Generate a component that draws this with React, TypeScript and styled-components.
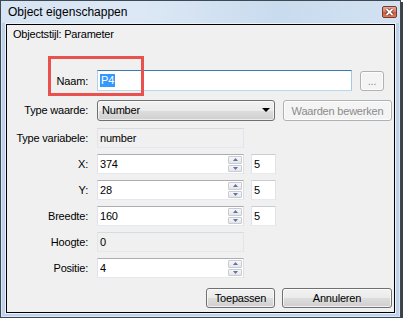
import styled, { createGlobalStyle } from 'styled-components';

const GlobalStyle = createGlobalStyle`
  * { box-sizing: border-box; }
  html, body { margin: 0; padding: 0; background: #ffffff; }
  body {
    font-family: "Liberation Sans", Arial, sans-serif;
    font-size: 11px;
    letter-spacing: -0.2px;
    color: #000;
  }
`;

const Window = styled.div`
  position: relative;
  width: 401px;
  height: 318px;
  border: 1px solid #3f4953;
  background: #bdd2ea;
  box-shadow: 2px 2px 0 rgba(30, 30, 30, 0.85), inset 0 0 0 1px rgba(255, 255, 255, 0.45);
  display: flex;
  flex-direction: column;
`;

const TitleBar = styled.div`
  height: 22px;
  flex: none;
  display: flex;
  align-items: flex-start;
  justify-content: space-between;
  padding: 4px 3px 0 7px;
  background: linear-gradient(to right, #d6e4f3 0%, #dce8f5 35%, #c9dbee 70%, #d2e2f2 100%);
`;

const Title = styled.span`
  font-size: 12px;
  line-height: 15px;
  letter-spacing: 0;
`;

const CloseButton = styled.div`
  width: 15px;
  height: 12px;
  margin-top: 1px;
  border: 1px solid #7a3a2c;
  border-radius: 2px;
  background: linear-gradient(#eaa996 0%, #d98068 45%, #cb5a3f 55%, #de7c5f 100%);
  display: flex;
  align-items: center;
  justify-content: center;
`;

const Panel = styled.div`
  position: relative;
  flex: 1;
  margin: 1px 5px 4px 5px;
  border: 1px solid #000;
  box-shadow: 0 0 0 1px rgba(255, 255, 255, 0.7);
  background: #f0f0f0;
  padding: 3px 2px 0 0;
  display: flex;
  flex-direction: column;
`;

const Header = styled.div`
  line-height: 13px;
  padding-left: 6px;
`;

const Row = styled.div<{ $top: number; $h?: number }>`
  display: flex;
  align-items: center;
  margin-top: ${p => p.$top}px;
  height: ${p => p.$h ?? 20}px;
`;

const Label = styled.label`
  width: 81px;
  margin-right: 9px;
  text-align: right;
  flex: none;
`;

const TextBox = styled.div<{ $w: number; $h?: number; $focus?: boolean; $readOnly?: boolean }>`
  width: ${p => p.$w}px;
  height: ${p => p.$h ?? 20}px;
  border: 1px solid;
  border-color: ${p =>
    p.$focus ? '#3d7bad #a4c9e3 #b7d9ed #b5cfe7'
    : p.$readOnly ? '#d7dbe0 #e1e4e8 #e6e9ec #e1e4e8'
    : '#abadb3 #dbdfe6 #e3e9ef #e2e3ea'};
  background: ${p => (p.$readOnly ? '#f0f0f0' : '#ffffff')};
  padding-left: 2px;
  display: flex;
  align-items: center;
  line-height: 13px;
`;

const Selected = styled.span`
  background: #3399ff;
  color: #fff;
  padding: 0 1px;
`;

const SpinBox = styled.div`
  width: 147px;
  height: 20px;
  border: 1px solid;
  border-color: #abadb3 #dbdfe6 #e3e9ef #e2e3ea;
  background: #fff;
  display: flex;
  align-items: stretch;
  padding: 1px;
`;

const SpinValue = styled.span`
  flex: 1;
  padding-left: 1px;
  display: flex;
  align-items: center;
`;

const SpinButtons = styled.div`
  width: 14px;
  display: flex;
  flex-direction: column;
  gap: 1px;
`;

const SpinButton = styled.div`
  flex: 1;
  border: 1px solid #c8ccd2;
  border-radius: 1px;
  background: linear-gradient(#f7f7f7, #e6e6e6);
  display: flex;
  align-items: center;
  justify-content: center;
`;

const SmallBox = styled(TextBox)`
  margin-left: 7px;
  border-color: #c9ced5 #e0e4e9 #e6e9ee #e0e4e9;
`;

const Select = styled.div`
  width: 178px;
  height: 21px;
  border: 1px solid #707070;
  border-radius: 3px;
  background: linear-gradient(#f2f2f2 0%, #ebebeb 50%, #dddddd 51%, #cfcfcf 100%);
  box-shadow: inset 0 0 0 1px rgba(255, 255, 255, 0.6);
  display: flex;
  align-items: center;
  justify-content: space-between;
  padding: 0 4px 0 4px;
`;

const Arrow = styled.span`
  width: 0;
  height: 0;
  border-left: 4px solid transparent;
  border-right: 4px solid transparent;
  border-top: 4px solid #000;
`;

const Button = styled.div<{ $w: number; $h?: number; $disabled?: boolean; $ml?: number }>`
  width: ${p => p.$w}px;
  height: ${p => p.$h ?? 20}px;
  margin-left: ${p => p.$ml ?? 7}px;
  border: 1px solid ${p => (p.$disabled ? '#adb2b5' : '#707070')};
  border-radius: 3px;
  background: ${p =>
    p.$disabled ? '#f4f4f4' : 'linear-gradient(#f2f2f2 0%, #ebebeb 50%, #dddddd 51%, #cfcfcf 100%)'};
  box-shadow: inset 0 0 0 1px rgba(255, 255, 255, 0.7);
  color: ${p => (p.$disabled ? '#8b8b8b' : '#000')};
  display: flex;
  align-items: center;
  justify-content: center;
  flex: none;
`;

const ButtonRow = styled.div`
  display: flex;
  justify-content: flex-end;
  margin-top: 10px;
`;

const Annotation = styled.div`
  position: absolute;
  left: 41px;
  top: 31px;
  width: 96px;
  height: 40px;
  border: 3px solid #e8514e;
  pointer-events: none;
`;

const Tri = ({ up }: { up?: boolean }) => (
  <svg width="5" height="3" viewBox="0 0 5 3">
    <path d={up ? 'M0 3 L2.5 0 L5 3 Z' : 'M0 0 L2.5 3 L5 0 Z'} fill="#5a72ad" />
  </svg>
);

const Spin = ({ value }: { value: string }) => (
  <SpinBox>
    <SpinValue>{value}</SpinValue>
    <SpinButtons>
      <SpinButton><Tri up /></SpinButton>
      <SpinButton><Tri /></SpinButton>
    </SpinButtons>
  </SpinBox>
);

export default function App() {
  return (
    <>
      <GlobalStyle />
      <Window>
        <TitleBar>
          <Title>Object eigenschappen</Title>
          <CloseButton>
            <svg width="9" height="8" viewBox="0 0 9 8">
              <path d="M1.5 1 L7.5 7 M7.5 1 L1.5 7" stroke="#5a2a20" strokeWidth="3.2" />
              <path d="M1.5 1 L7.5 7 M7.5 1 L1.5 7" stroke="#ffffff" strokeWidth="1.8" />
            </svg>
          </CloseButton>
        </TitleBar>
        <Panel>
          <Header>Objectstijl: Parameter</Header>

          <Row $top={29} $h={21}>
            <Label>Naam:</Label>
            <TextBox $w={255} $h={21} $focus>
              <Selected>P4</Selected>
            </TextBox>
            <Button $w={24} $h={20} $ml={8} $disabled>...</Button>
          </Row>

          <Row $top={8} $h={22}>
            <Label>Type waarde:</Label>
            <Select>
              <span>Number</span>
              <Arrow />
            </Select>
            <Button $w={109} $h={21} $ml={8} $disabled style={{ alignSelf: 'flex-end' }}>
              Waarden bewerken
            </Button>
          </Row>

          <Row $top={7}>
            <Label>Type variabele:</Label>
            <TextBox $w={147} $readOnly>number</TextBox>
          </Row>

          <Row $top={6}>
            <Label>X:</Label>
            <Spin value="374" />
            <SmallBox $w={25}>5</SmallBox>
          </Row>

          <Row $top={6}>
            <Label>Y:</Label>
            <Spin value="28" />
            <SmallBox $w={25}>5</SmallBox>
          </Row>

          <Row $top={6}>
            <Label>Breedte:</Label>
            <Spin value="160" />
            <SmallBox $w={25}>5</SmallBox>
          </Row>

          <Row $top={6}>
            <Label>Hoogte:</Label>
            <TextBox $w={147} $readOnly>0</TextBox>
          </Row>

          <Row $top={6}>
            <Label>Positie:</Label>
            <Spin value="4" />
          </Row>

          <ButtonRow>
            <Button $w={69}>Toepassen</Button>
            <Button $w={110}>Annuleren</Button>
          </ButtonRow>

          <Annotation />
        </Panel>
      </Window>
    </>
  );
}
